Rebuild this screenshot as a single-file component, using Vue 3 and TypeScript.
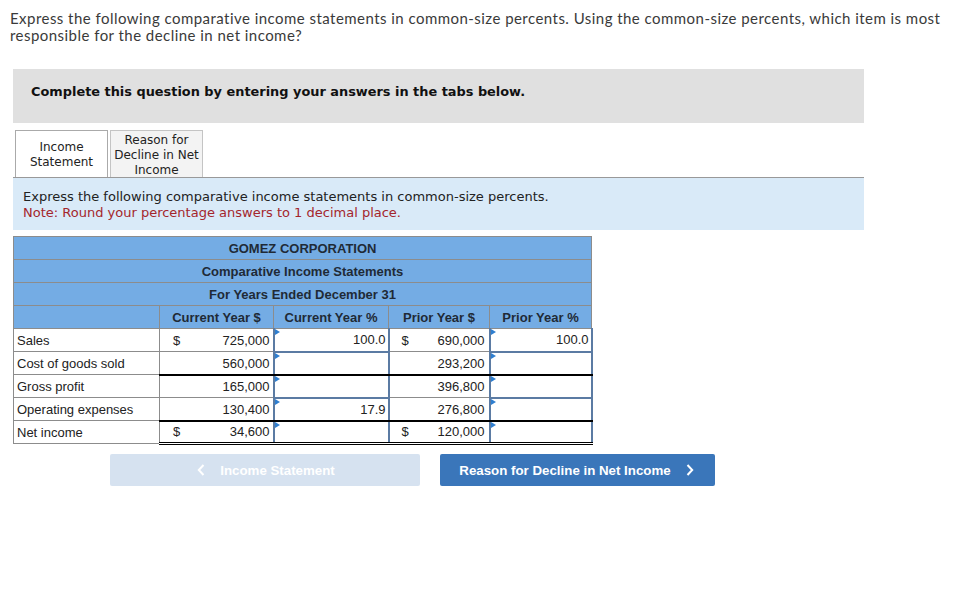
<script setup lang="ts">
interface Row { label: string; sym1: string; cur: string; curPct: string; sym2: string; prior: string; priorPct: string; kind: string }
const rows: Row[] = [
  { label: 'Sales', sym1: '$', cur: '725,000', curPct: '100.0', sym2: '$', prior: '690,000', priorPct: '100.0', kind: 'plain' },
  { label: 'Cost of goods sold', sym1: '', cur: '560,000', curPct: '', sym2: '', prior: '293,200', priorPct: '', kind: 'sub' },
  { label: 'Gross profit', sym1: '', cur: '165,000', curPct: '', sym2: '', prior: '396,800', priorPct: '', kind: 'plain' },
  { label: 'Operating expenses', sym1: '', cur: '130,400', curPct: '17.9', sym2: '', prior: '276,800', priorPct: '', kind: 'sub' },
  { label: 'Net income', sym1: '$', cur: '34,600', curPct: '', sym2: '$', prior: '120,000', priorPct: '', kind: 'total' },
]
const heads = ['GOMEZ CORPORATION', 'Comparative Income Statements', 'For Years Ended December 31']
</script>

<template>
  <div class="page">
    <p class="question">Express the following comparative income statements in common-size percents. Using the common-size percents, which item is most responsible for the decline in net income?</p>
    <div class="banner">Complete this question by entering your answers in the tabs below.</div>
    <div class="tabs">
      <div class="tab active">Income<br />Statement</div>
      <div class="tab">Reason for<br />Decline in Net<br />Income</div>
    </div>
    <div class="instructions">
      <div>Express the following comparative income statements in common-size percents.</div>
      <div class="note">Note: Round your percentage answers to 1 decimal place.</div>
    </div>
    <table class="sheet">
      <colgroup>
        <col class="c1" /><col class="c2" /><col class="c3" /><col class="c4" /><col class="c5" />
      </colgroup>
      <thead>
        <tr v-for="h in heads" :key="h"><th colspan="5" class="head">{{ h }}</th></tr>
        <tr>
          <th class="head"></th>
          <th class="head">Current Year $</th>
          <th class="head">Current Year %</th>
          <th class="head">Prior Year $</th>
          <th class="head">Prior Year %</th>
        </tr>
      </thead>
      <tbody>
        <tr v-for="r in rows" :key="r.label" :class="r.kind">
          <td class="label">{{ r.label }}</td>
          <td class="given"><div class="money"><span class="sym s1">{{ r.sym1 }}</span><span>{{ r.cur }}</span></div></td>
          <td class="entry"><i class="flag"></i><div class="val">{{ r.curPct }}</div></td>
          <td class="given prior"><div class="money"><span class="sym s2">{{ r.sym2 }}</span><span>{{ r.prior }}</span></div></td>
          <td class="entry"><i class="flag"></i><div class="val">{{ r.priorPct }}</div></td>
        </tr>
      </tbody>
    </table>
    <div class="nav">
      <button class="btn prev" type="button">
        <svg class="chev" width="8" height="12" viewBox="0 0 8 12"><path d="M6.5 1 L1.8 6 L6.5 11" fill="none" stroke="#fff" stroke-width="2" /></svg>
        <span>Income Statement</span>
      </button>
      <button class="btn next" type="button">
        <span>Reason for Decline in Net Income</span>
        <svg class="chev" width="8" height="12" viewBox="0 0 8 12"><path d="M1.5 1 L6.2 6 L1.5 11" fill="none" stroke="#fff" stroke-width="2" /></svg>
      </button>
    </div>
  </div>
</template>

<style>
html, body { margin: 0; background: #fff; }
</style>

<style scoped>
.page { width: 975px; height: 589px; overflow: hidden; box-sizing: border-box; padding: 10px 0 0 0; position: relative; }
.question {
  margin: 0 0 0 10px; width: 945px;
  font: 15px/17px Lato, "Open Sans", sans-serif; color: #3a3a3a; letter-spacing: 0.46px;
}
.banner {
  margin: 25px 0 0 13px; width: 851px; height: 54px; box-sizing: border-box;
  background: #e0e0e0; padding: 14px 18px;
  font: bold 12.9px/17px "DejaVu Sans", sans-serif; color: #111;
}
.tabs { display: flex; gap: 2px; margin: 7px 0 0 15px; height: 47px; align-items: flex-end; }
.tab {
  width: 93px; height: 47px; box-sizing: border-box; border: 1px solid #c4c4c4; border-bottom: 0;
  background: #f3f3f3; text-align: center;
  font: 12px/15px "DejaVu Sans", sans-serif; color: #222;
  display: flex; align-items: center; justify-content: center; padding-top: 2px;
}
.tab.active { background: #fff; border-color: #aaa; padding-top: 2px; }
.instructions {
  margin-left: 13px; width: 851px; height: 53px; box-sizing: border-box;
  background: #d9eaf8; border-top: 1px solid #999; padding: 11px 10px 0;
  font: 13px/16px "DejaVu Sans", sans-serif; color: #222;
}
.note { color: #a4262c; }
.sheet {
  margin: 6px 0 0 13px; width: 578px; table-layout: fixed; border-collapse: collapse;
  font: 13px "Liberation Sans", Arial, sans-serif; color: #222;
}
.c1 { width: 146px; } .c2 { width: 114px; } .c3 { width: 115px; } .c4 { width: 101px; } .c5 { width: 102px; }
th, td { height: 23px; padding: 0; box-sizing: border-box; border: 1px solid #8c8c8c; }
.head { background: #74ace4; font-weight: bold; text-align: center; font-size: 13px; color: #1f2a36; }
.label { padding-left: 3px; background: #fff; }
.given { padding: 0 3px 0 0; background: #fff; }
.given.prior { padding-right: 4px; }
.sub .given { padding-top: 1px; }
.money { display: flex; justify-content: flex-end; position: relative; }
.sym { position: absolute; top: 0; }
.s1 { left: 13px; }
.s2 { left: 12px; }
.entry { position: relative; border: 2px solid #5b7ba3; border-top-width: 1px; background: #fff; padding: 1px 2px 0 0; text-align: right; }
.val { line-height: 18px; }
.flag {
  position: absolute; left: 0; top: 0; width: 0; height: 0;
  border-left: 5px solid #2f7fd0; border-top: 3px solid transparent; border-bottom: 3px solid transparent;
}
.sub td { border-bottom: 2px solid #000; }
.sub td.label { border-bottom: 1px solid #8c8c8c; }
.total td.given, .total td.entry { border-bottom: 3px double #000; }
.nav { display: flex; gap: 20px; margin: 9px 0 0 110px; }
.btn {
  height: 32px; border: 0; border-radius: 2px; display: flex; align-items: center; justify-content: center; padding: 0;
  font: bold 13.3px "Liberation Sans", Arial, sans-serif; color: #fff;
}
.prev { width: 310px; background: #d6e2f0; gap: 15px; padding-left: 2px; }
.next { width: 275px; background: #3a76ba; gap: 15px; padding-right: 2px; }
</style>
